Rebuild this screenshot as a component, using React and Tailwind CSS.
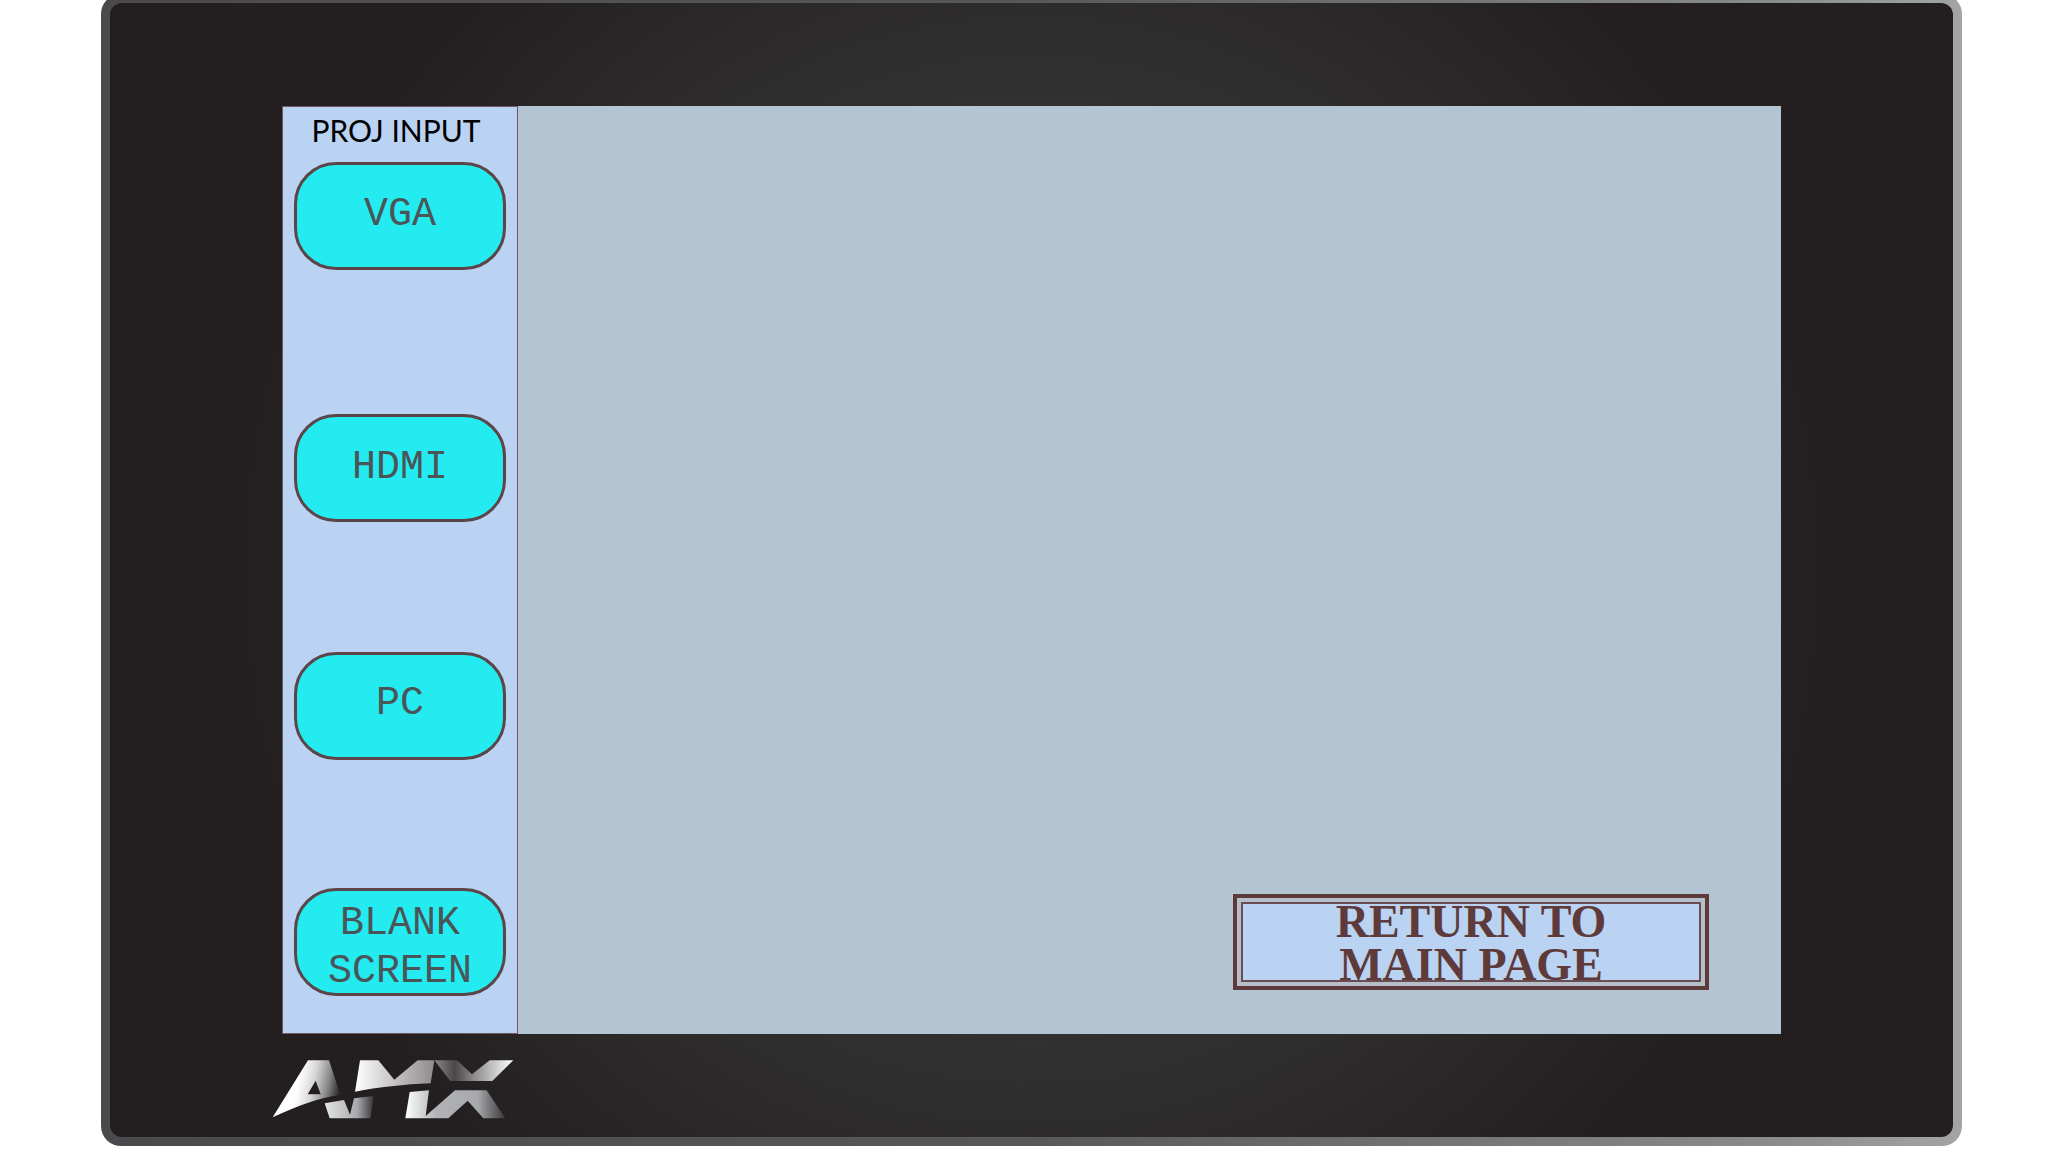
import React, { useState } from 'react';

const inputs = [
  { id: 'vga', label: 'VGA', spacing: 'mt-0', padding: 'pb-0.5' },
  { id: 'hdmi', label: 'HDMI', spacing: 'mt-36', padding: 'pb-0' },
  { id: 'pc', label: 'PC', spacing: 'mt-[130px]', padding: 'pb-1' },
  { id: 'blank', label: 'BLANK SCREEN', spacing: 'mt-32', padding: 'pt-3' },
];

const AmxLogo = () => (
  <svg viewBox="0 0 726 180" className="w-[242px] h-[60px]" role="img" aria-label="AMX">
    <defs>
      <linearGradient id="legLeft" gradientUnits="userSpaceOnUse" x1="80" y1="60" x2="205" y2="85">
        <stop offset="0" stopColor="#ffffff" />
        <stop offset="0.35" stopColor="#d8d8da" />
        <stop offset="0.7" stopColor="#8a888a" />
        <stop offset="1" stopColor="#2b2829" />
      </linearGradient>
      <linearGradient id="footLeft" gradientUnits="userSpaceOnUse" x1="155" y1="0" x2="310" y2="0">
        <stop offset="0" stopColor="#e6e7e8" />
        <stop offset="0.65" stopColor="#a7a9ac" />
        <stop offset="1" stopColor="#2b2829" />
      </linearGradient>
      <linearGradient id="middle" gradientUnits="userSpaceOnUse" x1="250" y1="0" x2="485" y2="0">
        <stop offset="0" stopColor="#ffffff" />
        <stop offset="0.5" stopColor="#c4c2c3" />
        <stop offset="1" stopColor="#8f8d8e" />
      </linearGradient>
      <linearGradient id="footRight" gradientUnits="userSpaceOnUse" x1="400" y1="0" x2="710" y2="0">
        <stop offset="0" stopColor="#ffffff" />
        <stop offset="0.3" stopColor="#b0b2b5" />
        <stop offset="0.7" stopColor="#a7a9ac" />
        <stop offset="1" stopColor="#2b2829" />
      </linearGradient>
      <linearGradient id="armRight" gradientUnits="userSpaceOnUse" x1="487" y1="0" x2="722" y2="0">
        <stop offset="0" stopColor="#8a888a" />
        <stop offset="0.26" stopColor="#4a4748" />
        <stop offset="0.5" stopColor="#8a888a" />
        <stop offset="1" stopColor="#ffffff" />
      </linearGradient>
    </defs>
    <path
      fill="url(#legLeft)"
      fillRule="evenodd"
      d="M108 4H171L205 107C140 117 75 140 2 175ZM131 65L107 106H146Z"
    />
    <path fill="url(#footLeft)" d="M158 133L216 123L234 167L246 118L305 111L295 178H173Z" />
    <path fill="url(#middle)" d="M264 4H319L367 62L437 4H487L476 73C395 76 320 85 249 98Z" />
    <path
      fill="url(#footRight)"
      d="M413 99L471 94L461 171L549 94H644L700 178H634L587 125L529 178H400Z"
    />
    <path fill="url(#armRight)" d="M487 4H555L600 46L653 4H724L661 66H535Z" />
  </svg>
);

const InputButton = ({ label, padding, active, onClick }) => (
  <button
    type="button"
    onClick={onClick}
    aria-pressed={active}
    className={`flex h-27 w-full items-center justify-center rounded-[42px] border-3 border-[#5b4548] bg-[#24ebf0] px-6 text-center font-['Liberation_Mono',monospace] text-[40px] leading-12 text-[#4a5558] ${padding}`}
  >
    {label}
  </button>
);

const App = () => {
  const [selected, setSelected] = useState(null);

  return (
    <div className="overflow-hidden bg-white pr-[86px] pb-1.5 pl-[101px]">
      <div className="-mt-1.5 rounded-[20px] bg-[linear-gradient(to_right,#4a4a4c_0%,#58585a_50%,#8a8b8d_90%,#a3a4a6_100%)] p-[9px]">
        <div className="rounded-xl bg-[radial-gradient(circle_800px_at_center,#3c3a3a_0%,#323131_58%,#231f20_100%)] px-[172px] pt-[103px]">
          <main className="flex bg-[#b3c5d3]">
            <aside className="w-[236px] border border-[#6f5560] bg-[#bad3f2] px-[11px] pb-[37px]">
              <h1 className="pt-1 pr-2 pb-3 text-center font-[Lato,sans-serif] text-[30px] leading-[39px] text-black">
                PROJ INPUT
              </h1>
              {inputs.map((input) => (
                <div key={input.id} className={input.spacing}>
                  <InputButton
                    label={input.label}
                    padding={input.padding}
                    active={selected === input.id}
                    onClick={() => setSelected(input.id)}
                  />
                </div>
              ))}
            </aside>
            <section className="flex flex-1 items-end justify-end pr-[72px] pb-11">
              <button
                type="button"
                onClick={() => setSelected(null)}
                className="w-[476px] border-4 border-[#5e3a3a] bg-[#b4bfc9] p-1"
              >
                <span className="flex h-20 items-center justify-center border-2 border-[#6a4c55] bg-[#bad3f2] pt-0.5">
                  <span className="w-72 text-center font-['Liberation_Serif',serif] text-[46px] leading-[43px] font-bold text-[#5e3a3a]">
                    RETURN TO MAIN PAGE
                  </span>
                </span>
              </button>
            </section>
          </main>
          <footer className="-ml-2.5 flex h-[103px] items-start pt-[25px]">
            <AmxLogo />
          </footer>
        </div>
      </div>
    </div>
  );
};

export default App;
